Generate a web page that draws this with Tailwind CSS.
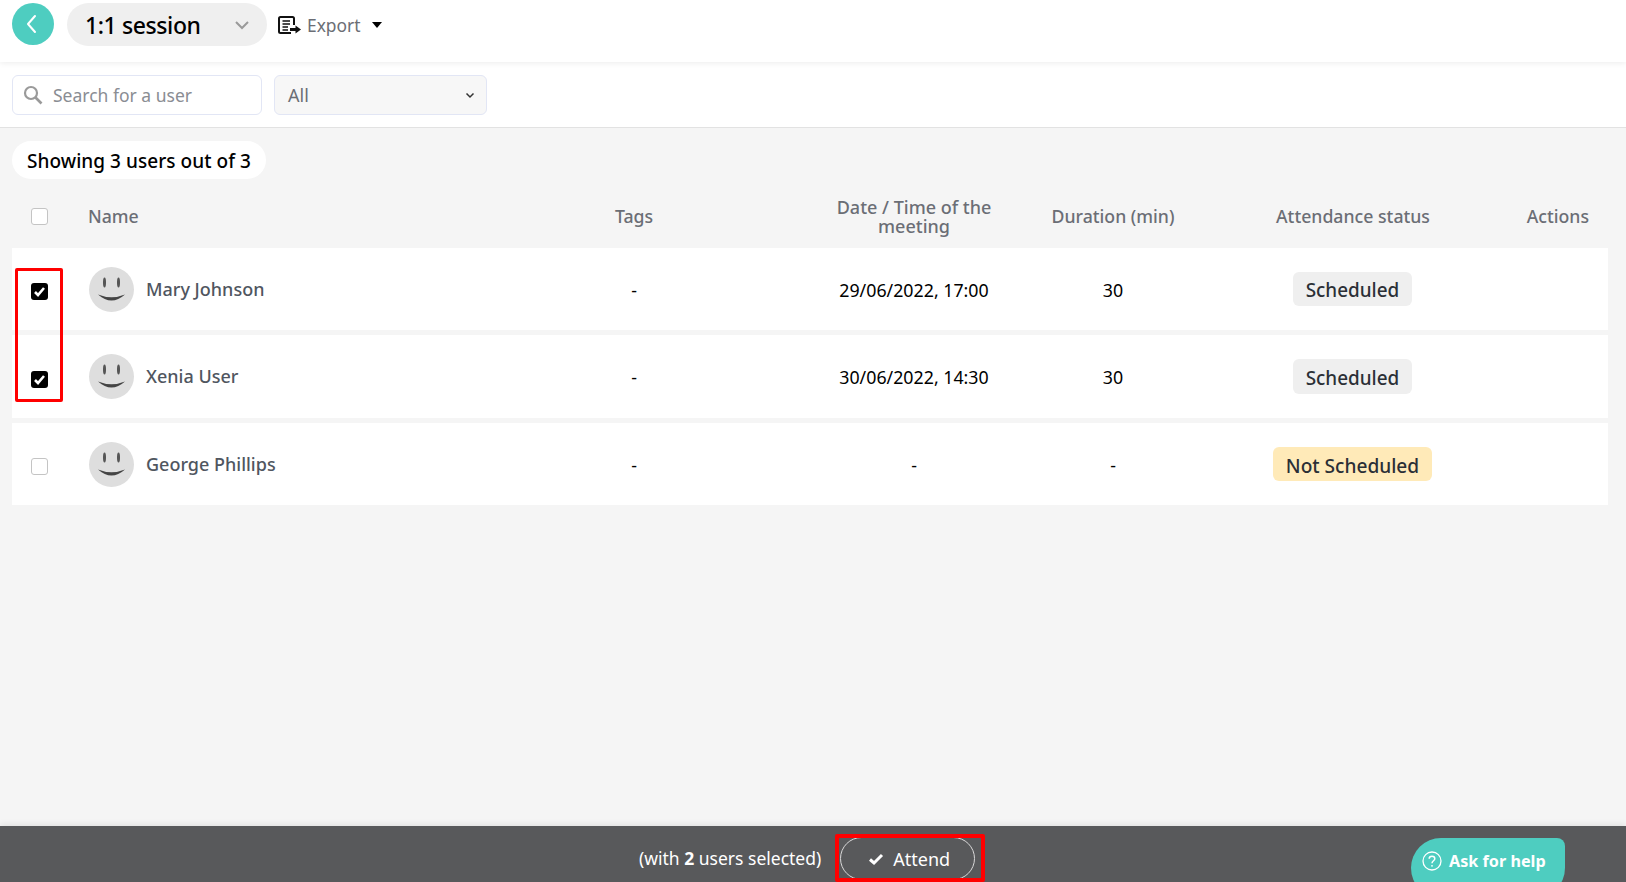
<!DOCTYPE html>
<html lang="en">
<head>
<meta charset="utf-8">
<title>1:1 session</title>
<script src="https://cdn.jsdelivr.net/npm/@tailwindcss/browser@4"></script>
</head>
<body class="font-['Noto_Sans',sans-serif]">
<div class="relative flex h-[882px] w-[1626px] flex-col overflow-hidden bg-[#f5f5f5]">
  <header class="z-10 flex h-[62px] shrink-0 items-start bg-white pt-[3px] pl-3 shadow-[0_1px_6px_rgba(0,0,0,0.08)]">
    <button class="flex size-[42px] items-center justify-center rounded-full bg-[#4ecdc0]">
      <svg class="mr-[2px] size-[24px]" viewBox="0 0 24 24" fill="none" stroke="white" stroke-width="2" stroke-linecap="round" stroke-linejoin="round"><path d="M15 4 L8 12 L15 20"/></svg>
    </button>
    <div class="ml-[13px] flex h-[43px] w-[200px] items-center justify-between rounded-full bg-[#efefef] pr-[17px] pl-[18px]">
      <span class="pt-[2px] text-[23px] leading-none font-medium tracking-[-0.4px] text-black">1:1 session</span>
      <svg class="size-[16px]" viewBox="0 0 16 16" fill="none" stroke="#9a9a9a" stroke-width="2"><path d="M2 5 L8 11 L14 5"/></svg>
    </div>
    <div class="ml-[11px] flex h-[43px] items-center">
      <svg class="h-[18px] w-[23px]" viewBox="0 0 23 18" fill="none" stroke="#111" stroke-width="2"><path d="M16 9 V2.5 Q16 1 14.5 1 H2.5 Q1 1 1 2.5 V15.5 Q1 17 2.5 17 H13"/><path d="M4.5 5 H12 M4.5 8 H12 M4.5 11 H10 M4.5 14 H10" stroke-width="1.3"/><path d="M12 13.5 H18" stroke-width="3"/><path d="M17.5 9.5 L23 13.5 L17.5 17.5 Z" fill="#111" stroke="none"/></svg>
      <span class="ml-[6px] pt-[2px] text-[17.4px] text-[#6b6e75]">Export</span>
      <span class="ml-[11px] h-0 w-0 border-x-[5px] border-t-[6px] border-x-transparent border-t-black"></span>
    </div>
  </header>

  <div class="flex h-[66px] shrink-0 items-start gap-3 border-b border-[#e2e2e2] bg-white pt-[13px] pl-3">
    <div class="flex h-10 w-[250px] items-center rounded-md border border-[#e2e6f5] bg-white pl-[10px]">
      <svg class="size-[20px]" viewBox="0 0 20 20" fill="none" stroke="#9a9a9a" stroke-width="2.2"><circle cx="8" cy="8" r="6"/><path d="M12.5 12.5 L18.5 18.5" stroke-width="2.6"/></svg>
      <span class="ml-[10px] text-[17.5px] text-[#8a8d93]">Search for a user</span>
    </div>
    <div class="flex h-10 w-[213px] items-center justify-between rounded-md border border-[#e2e6f5] bg-[#f7f7f7] pr-[11px] pl-[13px]">
      <span class="text-[18px] text-[#6b6e75]">All</span>
      <svg class="size-[10px]" viewBox="0 0 10 10" fill="none" stroke="#333" stroke-width="1.5"><path d="M1.5 3.5 L5 7 L8.5 3.5"/></svg>
    </div>
  </div>

  <main class="flex-1 px-3">
    <div class="mt-[13px] inline-flex h-[38px] items-center rounded-full bg-white px-[15px] pt-[2px] text-[19px] font-medium tracking-[0.05px] text-black">Showing 3 users out of 3</div>

    <div class="grid h-[69px] w-[1596px] grid-cols-[55px_387px_360px_200px_198px_282px_114px] items-center pt-[6px] text-center text-[17.7px] leading-[19px] font-medium text-[#6b6e75]">
      <div class="flex justify-center"><span class="size-[17px] rounded-[3px] border border-[#c4c4c4] bg-white"></span></div>
      <div class="pl-[21px] text-left">Name</div>
      <div>Tags</div>
      <div class="text-[18px]">Date / Time of the meeting</div>
      <div>Duration (min)</div>
      <div>Attendance status</div>
      <div class="pr-[19px] text-right">Actions</div>
    </div>

    <div class="flex w-[1596px] flex-col gap-[5px]">
      <div class="grid h-[82px] grid-cols-[55px_387px_360px_200px_198px_282px_114px] items-center bg-white text-center text-[17.8px] text-black">
        <div class="flex justify-center pt-[4px]">
          <span class="flex size-[17px] items-center justify-center rounded-[3px] bg-black"><svg class="size-[13px]" viewBox="0 0 13 13" fill="none" stroke="white" stroke-width="2.6"><path d="M2 7 L5 10 L11 3"/></svg></span>
        </div>
        <div class="flex items-center pl-[22px] text-left">
          <svg class="size-[45px] shrink-0" viewBox="0 0 45 45"><circle cx="22.5" cy="22.5" r="22.5" fill="#dedede"/><ellipse cx="15.5" cy="15.5" rx="1.5" ry="5" fill="#555"/><ellipse cx="29.5" cy="15.5" rx="1.5" ry="5" fill="#555"/><path d="M9 27.5 Q22.5 39.5 36 27.5 Q22.5 33 9 27.5 Z" fill="#444"/></svg>
          <span class="ml-3 text-[18px] font-medium text-[#50565f]">Mary Johnson</span>
        </div>
        <div class="pt-[2px]">-</div>
        <div class="pt-[2px]">29/06/2022, 17:00</div>
        <div class="pt-[2px]">30</div>
        <div class="flex justify-center pr-[1px]"><span class="flex h-[34px] w-[119px] items-center justify-center rounded-md bg-[#efefef] pt-[3px] text-[18.9px] font-medium text-[#2b2f36]">Scheduled</span></div>
        <div></div>
      </div>

      <div class="grid h-[83px] grid-cols-[55px_387px_360px_200px_198px_282px_114px] items-center bg-white text-center text-[17.8px] text-black">
        <div class="flex justify-center pt-[6px]">
          <span class="flex size-[17px] items-center justify-center rounded-[3px] bg-black"><svg class="size-[13px]" viewBox="0 0 13 13" fill="none" stroke="white" stroke-width="2.6"><path d="M2 7 L5 10 L11 3"/></svg></span>
        </div>
        <div class="flex items-center pl-[22px] text-left">
          <svg class="size-[45px] shrink-0" viewBox="0 0 45 45"><circle cx="22.5" cy="22.5" r="22.5" fill="#dedede"/><ellipse cx="15.5" cy="15.5" rx="1.5" ry="5" fill="#555"/><ellipse cx="29.5" cy="15.5" rx="1.5" ry="5" fill="#555"/><path d="M9 27.5 Q22.5 39.5 36 27.5 Q22.5 33 9 27.5 Z" fill="#444"/></svg>
          <span class="ml-3 pb-[1px] text-[18px] font-medium text-[#50565f]">Xenia User</span>
        </div>
        <div class="pt-[2px]">-</div>
        <div class="pt-[2px]">30/06/2022, 14:30</div>
        <div class="pt-[2px]">30</div>
        <div class="flex justify-center pr-[1px]"><span class="flex h-[35px] w-[119px] items-center justify-center rounded-md bg-[#efefef] pt-[3px] text-[18.9px] font-medium text-[#2b2f36]">Scheduled</span></div>
        <div></div>
      </div>

      <div class="grid h-[82px] grid-cols-[55px_387px_360px_200px_198px_282px_114px] items-center bg-white text-center text-[17.8px] text-black">
        <div class="flex justify-center pt-[4px]">
          <span class="size-[17px] rounded-[3px] border border-[#c4c4c4] bg-white"></span>
        </div>
        <div class="flex items-center pl-[22px] text-left">
          <svg class="size-[45px] shrink-0" viewBox="0 0 45 45"><circle cx="22.5" cy="22.5" r="22.5" fill="#dedede"/><ellipse cx="15.5" cy="15.5" rx="1.5" ry="5" fill="#555"/><ellipse cx="29.5" cy="15.5" rx="1.5" ry="5" fill="#555"/><path d="M9 27.5 Q22.5 39.5 36 27.5 Q22.5 33 9 27.5 Z" fill="#444"/></svg>
          <span class="ml-3 text-[18px] font-medium text-[#50565f]">George Phillips</span>
        </div>
        <div class="pt-[2px]">-</div>
        <div class="pt-[2px]">-</div>
        <div class="pt-[2px]">-</div>
        <div class="flex justify-center pr-[1px]"><span class="flex h-[34px] w-[159px] items-center justify-center rounded-md bg-[#ffeab8] pt-[4px] text-[19.1px] font-medium text-[#2b2f36]">Not Scheduled</span></div>
        <div></div>
      </div>
    </div>
  </main>

  <footer class="flex h-[56px] shrink-0 items-start bg-[#58595b] pt-[11px] pl-[639px] text-[17.5px] text-white shadow-[0_-2px_6px_rgba(0,0,0,0.08)]">
    <span class="pt-[8px]">(with <b class="font-bold">2</b> users selected)</span>
    <button class="ml-[19px] flex h-[43px] w-[135px] items-center justify-center gap-[9px] rounded-full border border-[#d8d8d8] pt-[1px] pl-[3px] text-white">
      <svg class="size-[16px]" viewBox="0 0 16 16" fill="none" stroke="white" stroke-width="3"><path d="M2 8.5 L6 12 L14 4"/></svg>
      <span class="text-[18px]">Attend</span>
    </button>
  </footer>

  <div class="pointer-events-none absolute top-[268px] left-[15px] h-[134px] w-[48px] rounded-[2px] border-[3px] border-[#ff0000]"></div>
  <div class="pointer-events-none absolute top-[834px] left-[835px] h-[48px] w-[150px] rounded-[2px] border-[4px] border-[#ff0000]"></div>

  <div class="absolute top-[838px] left-[1411px] flex h-[60px] w-[154px] items-start gap-[7px] rounded-tl-[30px] rounded-tr-[8px] rounded-br-[30px] rounded-bl-[30px] bg-[#4ecdc0] pt-[10px] pl-[11px] text-[16.2px] leading-[26px] font-bold text-white">
    <svg class="mt-[3px] size-[20px]" viewBox="0 0 20 20" fill="none" stroke="white" stroke-width="1.3"><circle cx="10" cy="10" r="9"/><path d="M7.2 7.7 C7.2 4.5 12.8 4.5 12.8 7.7 C12.8 9.8 10 9.8 10 12.3" stroke-width="1.5"/><circle cx="10" cy="14.8" r="0.9" fill="white" stroke="none"/></svg>
    <span>Ask for help</span>
  </div>
</div>
</body>
</html>
